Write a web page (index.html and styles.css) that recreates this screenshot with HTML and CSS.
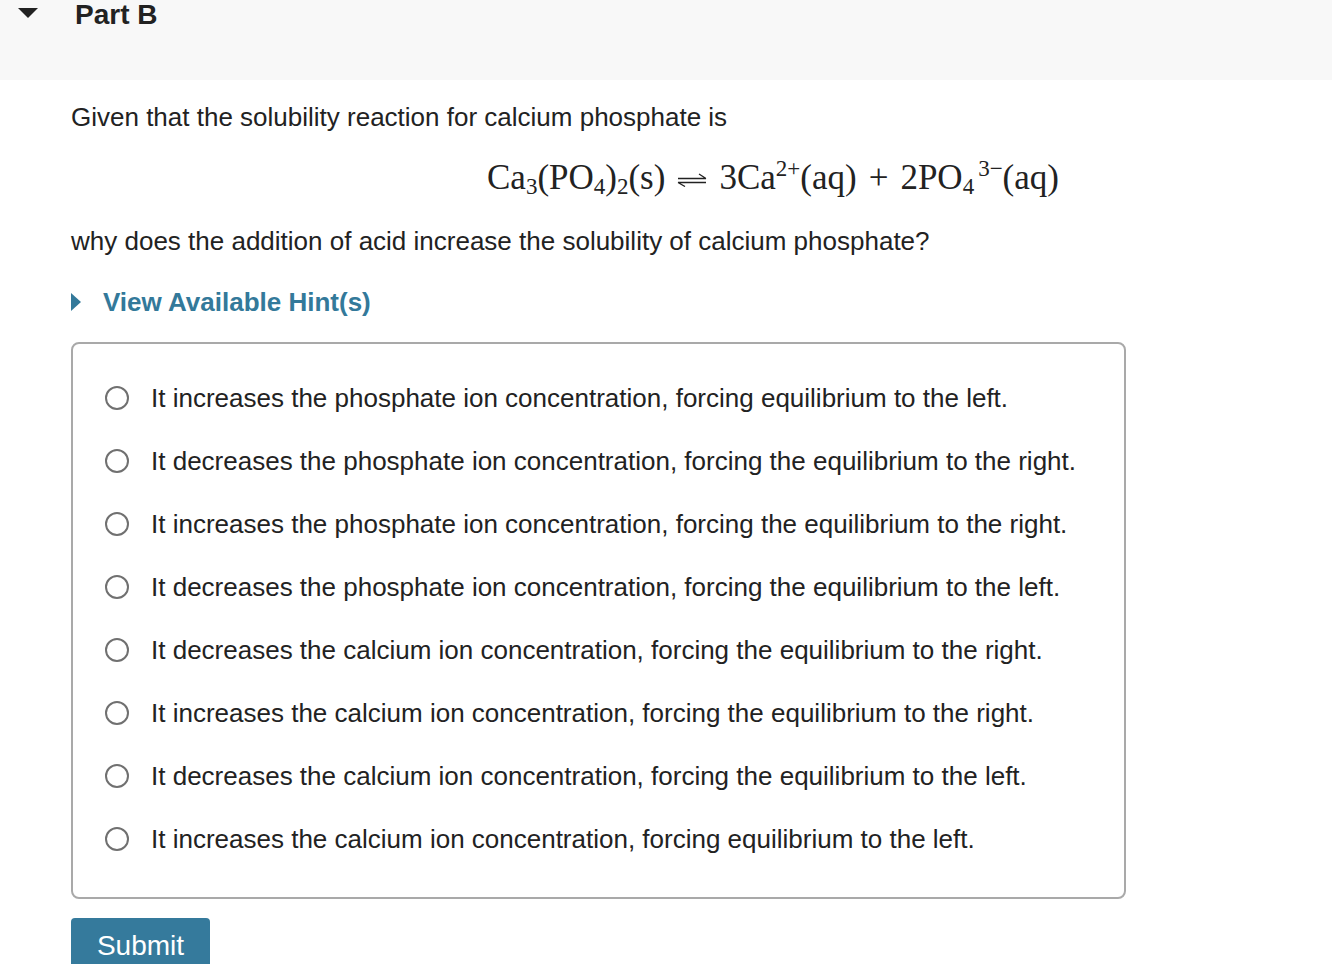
FILE: index.html
```html
<!DOCTYPE html>
<html lang="en">

<head>
    <meta charset="UTF-8">
    <title>Part B</title>
    <link rel="stylesheet" href="styles.css">
</head>

<body>
    <div class="part-header">
        <span class="caret-down"></span>
        <h2>Part B</h2>
    </div>
    <div class="part-body">
        <p class="question first">Given that the solubility reaction for calcium phosphate is</p>
        <div class="equation">
            <span>Ca<sub>3</sub>(PO<sub>4</sub>)<sub>2</sub>(s)</span>
            <svg class="eq-arrow" viewBox="0 0 30 14" width="30" height="14">
                <path d="M1 5.5H29M29 5.5L22 1" stroke="#222" stroke-width="1.3" fill="none"/>
                <path d="M1 9.5H29M1 9.5L8 13.5" stroke="#222" stroke-width="1.3" fill="none"/>
            </svg>
            <span>3Ca<sup>2+</sup>(aq)</span>
            <span class="plus">+</span>
            <span>2PO<sub>4</sub><sup class="charge">3&minus;</sup>(aq)</span>
        </div>
        <p class="question">why does the addition of acid increase the solubility of calcium phosphate?</p>

        <div class="hint-toggle">
            <span class="caret-right"></span>
            <a href="#">View Available Hint(s)</a>
        </div>

        <div class="choices">
            <label class="choice"><span class="radio"></span>It increases the phosphate ion concentration, forcing equilibrium to the left.</label>
            <label class="choice"><span class="radio"></span>It decreases the phosphate ion concentration, forcing the equilibrium to the right.</label>
            <label class="choice"><span class="radio"></span>It increases the phosphate ion concentration, forcing the equilibrium to the right.</label>
            <label class="choice"><span class="radio"></span>It decreases the phosphate ion concentration, forcing the equilibrium to the left.</label>
            <label class="choice"><span class="radio"></span>It decreases the calcium ion concentration, forcing the equilibrium to the right.</label>
            <label class="choice"><span class="radio"></span>It increases the calcium ion concentration, forcing the equilibrium to the right.</label>
            <label class="choice"><span class="radio"></span>It decreases the calcium ion concentration, forcing the equilibrium to the left.</label>
            <label class="choice"><span class="radio"></span>It increases the calcium ion concentration, forcing equilibrium to the left.</label>
        </div>

        <button class="submit-btn">Submit</button>
    </div>
</body>

</html>
```

FILE: styles.css
```css
body {
    margin: 0;
    font-family: 'Liberation Sans', Arial, sans-serif;
    color: #222222;
    background: #ffffff;
}

.part-header {
    background-color: #f8f8f8;
    height: 80px;
    display: flex;
    align-items: flex-start;
}

.caret-down {
    width: 0;
    height: 0;
    border-left: 10px solid transparent;
    border-right: 10px solid transparent;
    border-top: 10px solid #222222;
    margin: 8px 0 0 18px;
}

.part-header h2 {
    margin: 0 0 0 37px;
    font-size: 28px;
    line-height: 30px;
    font-weight: 700;
    color: #222222;
}

.part-body {
    padding: 0 0 0 71px;
}

.question {
    margin: 0;
    font-size: 26px;
    line-height: 30px;
}

.question.first {
    margin-top: 22px;
}

.equation {
    font-family: 'Liberation Serif', 'Times New Roman', serif;
    font-size: 35px;
    line-height: 40px;
    margin: 26px 0 28px 416px;
    white-space: nowrap;
    display: flex;
    align-items: center;
    gap: 12px;
}

.equation sub,
.equation sup {
    font-size: 23px;
    line-height: 0;
}

.equation sub {
    vertical-align: -5px;
}

.equation .charge {
    margin-left: 4px;
}

.eq-arrow {
    display: block;
    margin-top: 4px;
}

.hint-toggle {
    display: flex;
    align-items: center;
    margin-top: 31px;
    height: 30px;
}

.caret-right {
    width: 0;
    height: 0;
    border-top: 9px solid transparent;
    border-bottom: 9px solid transparent;
    border-left: 10px solid #33799a;
}

.hint-toggle a {
    margin-left: 22px;
    font-size: 26px;
    font-weight: 700;
    color: #33799a;
    text-decoration: none;
}

.choices {
    box-sizing: border-box;
    width: 1055px;
    margin-top: 25px;
    border: 2px solid #a9a9a9;
    border-radius: 8px;
    padding: 39px 0 43px 32px;
    display: flex;
    flex-direction: column;
    gap: 33px;
}

.choice {
    display: flex;
    align-items: center;
    font-size: 26px;
    line-height: 30px;
    color: #222222;
}

.radio {
    width: 20px;
    height: 20px;
    border: 2px solid #707070;
    border-radius: 50%;
    margin-right: 22px;
    flex: none;
}

.submit-btn {
    margin-top: 19px;
    background-color: #357a9c;
    color: #ffffff;
    border: none;
    border-radius: 4px;
    font-family: inherit;
    font-size: 28px;
    padding: 12px 0 14px;
    width: 139px;
}
```
